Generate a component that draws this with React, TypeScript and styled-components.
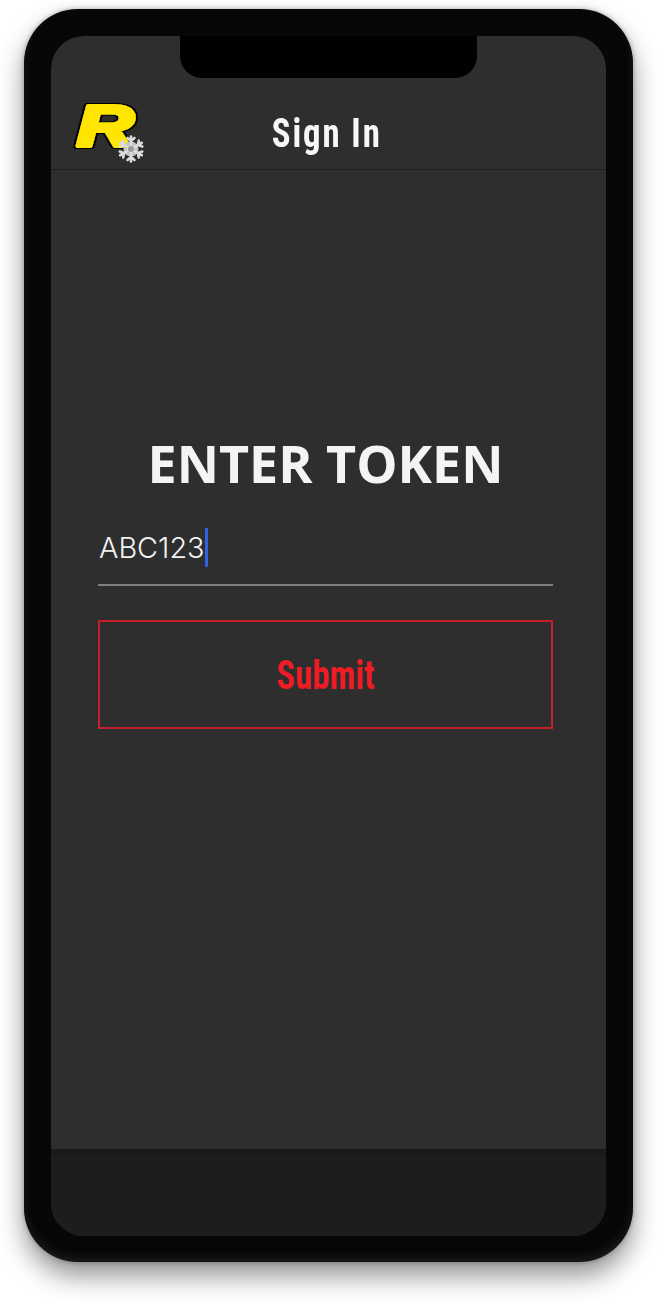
import React from 'react';
import styled, { createGlobalStyle } from 'styled-components';

const GlobalStyle = createGlobalStyle`
  html, body {
    margin: 0;
    padding: 0;
    background: #ffffff;
  }
`;

const Page = styled.div`
  width: 657px;
  height: 1302px;
  box-sizing: border-box;
  padding: 9px 24px 40px;
  overflow: hidden;
`;

const Phone = styled.div`
  width: 609px;
  height: 1253px;
  box-sizing: border-box;
  padding: 27px 27px 26px;
  background: #070707;
  border-radius: 54px;
  box-shadow: inset 0 -5px 8px rgba(60, 60, 60, 0.35), 0 14px 26px rgba(0, 0, 0, 0.42), 0 0 5px rgba(0, 0, 0, 0.3);
`;

const Screen = styled.div`
  position: relative;
  display: flex;
  flex-direction: column;
  height: 100%;
  background: #2e2e2e;
  border-radius: 33px;
  overflow: hidden;
`;

const Notch = styled.div`
  position: absolute;
  top: 0;
  left: 129px;
  width: 297px;
  height: 42px;
  background: #000000;
  border-radius: 0 0 22px 22px;
`;

const Header = styled.header`
  display: grid;
  grid-template-columns: 1fr auto 1fr;
  align-items: center;
  height: 134px;
  box-sizing: border-box;
  padding: 60px 25px 0 22px;
  border-bottom: 1px solid #1f1f1f;
`;

const HeaderTitle = styled.h1`
  margin: 0;
  font-family: "Roboto Condensed", "Liberation Sans Narrow", "Liberation Sans", sans-serif;
  font-size: 41px;
  line-height: 44px;
  font-weight: 700;
  letter-spacing: 2.2px;
  color: #f7f7f7;
  transform: scaleX(0.85);
  white-space: nowrap;
`;

const Logo = styled.svg`
  display: block;
  width: 74px;
  height: 66px;
  overflow: visible;
`;

const Main = styled.main`
  flex: 1;
  display: flex;
  flex-direction: column;
  padding: 259px 53px 0 47px;
`;

const Title = styled.h2`
  margin: 0;
  text-align: center;
  font-family: "Open Sans", sans-serif;
  font-size: 52px;
  line-height: 68px;
  font-weight: 700;
  color: #f4f4f4;
`;

const InputRow = styled.div`
  display: flex;
  align-items: center;
  height: 68px;
  margin-top: 21px;
  padding: 0 0 7px 1px;
  box-sizing: border-box;
  border-bottom: 2px solid #7f7f7f;
`;

const InputText = styled.span`
  font-family: Inter, "Liberation Sans", sans-serif;
  font-size: 28.8px;
  font-weight: 300;
  line-height: 40px;
  color: #f2f2f2;
`;

const Caret = styled.span`
  width: 3px;
  height: 39px;
  border-radius: 1px;
  background: #2f62e6;
`;

const SubmitButton = styled.button`
  display: block;
  width: 100%;
  height: 109px;
  margin-top: 34px;
  padding: 0;
  background: transparent;
  border: 2px solid #c3202b;
  font-family: "Roboto Condensed", "Liberation Sans Narrow", "Liberation Sans", sans-serif;
  font-size: 41px;
  font-weight: 700;
  color: #ee1c25;
`;

const SubmitLabel = styled.span`
  display: inline-block;
  transform: scaleX(0.85);
`;

const Footer = styled.footer`
  height: 79px;
  background: #1d1d1d;
  border-top: 8px solid #1a1a1a;
`;

function LogoMark() {
  const arms = [0, 60, 120, 180, 240, 300];
  return (
    <Logo viewBox="0 0 74 66">
      <defs>
        <filter id="r-outline" x="-20%" y="-20%" width="140%" height="140%">
          <feMorphology in="SourceAlpha" operator="dilate" radius="1.4" result="grown" />
          <feFlood floodColor="#000000" />
          <feComposite in2="grown" operator="in" result="edge" />
          <feMerge>
            <feMergeNode in="edge" />
            <feMergeNode in="SourceGraphic" />
          </feMerge>
        </filter>
      </defs>
      <text
        transform="translate(4 46) scale(1.4 1.03)"
        fontFamily="'Liberation Sans', sans-serif"
        fontSize="56"
        fontWeight="700"
        fontStyle="italic"
        fill="#ffe600"
        stroke="#ffe600"
        strokeWidth="4"
        strokeLinejoin="round"
        filter="url(#r-outline)"
      >
        R
      </text>
      <g transform="translate(58 49)" stroke="#dcdcdc" strokeLinecap="round">
        <circle r="7.5" fill="#c2c2c2" stroke="none" />
        {arms.map(a => (
          <g key={a} transform={`rotate(${a})`}>
            <path d="M0 0V-12.5M-3.5 -11L0 -8L3.5 -11" fill="none" strokeWidth="2.6" />
          </g>
        ))}
        <circle r="3" fill="#9a9a9a" stroke="none" />
      </g>
    </Logo>
  );
}

export default function App() {
  return (
    <>
      <GlobalStyle />
      <Page>
        <Phone>
          <Screen>
            <Notch />
            <Header>
              <LogoMark />
              <HeaderTitle>Sign In</HeaderTitle>
            </Header>
            <Main>
              <Title>ENTER TOKEN</Title>
              <InputRow>
                <InputText>ABC123</InputText>
                <Caret />
              </InputRow>
              <SubmitButton type="button">
                <SubmitLabel>Submit</SubmitLabel>
              </SubmitButton>
            </Main>
            <Footer />
          </Screen>
        </Phone>
      </Page>
    </>
  );
}
